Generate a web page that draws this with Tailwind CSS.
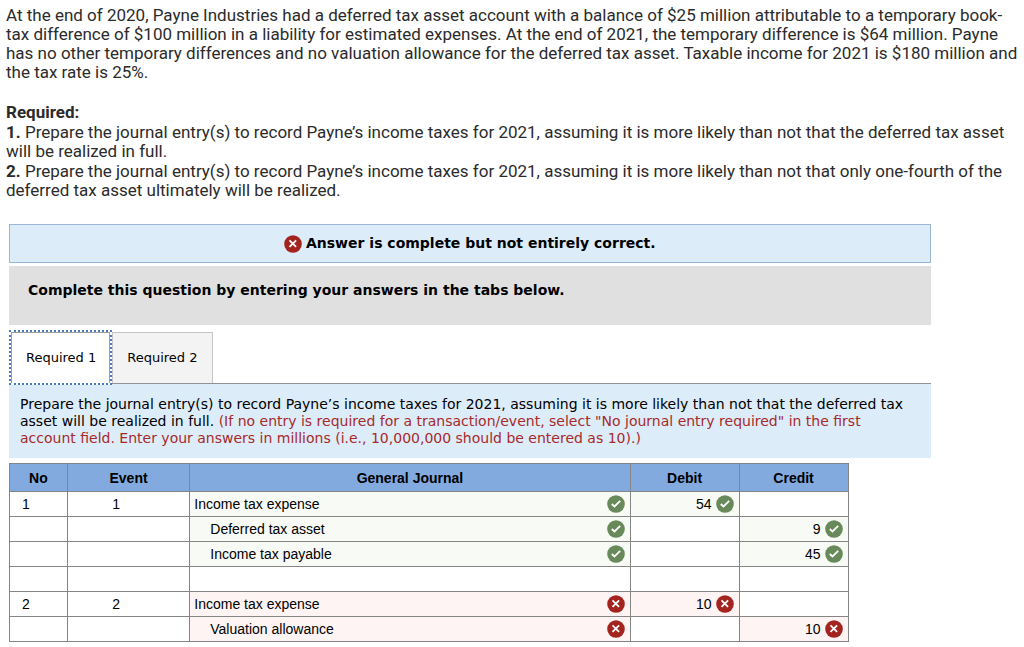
<!DOCTYPE html>
<html lang="en">
<head>
<meta charset="utf-8">
<meta name="viewport" content="width=device-width, initial-scale=1">
<title>Deferred tax asset journal entries</title>
<script src="https://cdn.jsdelivr.net/npm/@tailwindcss/browser@4"></script>
</head>
<body class="bg-white text-black">
<svg class="hidden" aria-hidden="true">
  <symbol id="ok" viewBox="0 0 18 18"><circle cx="9" cy="9" r="8.8" fill="#68895a"/><path d="M4.8 9 7.5 11.4 13.2 5.8" fill="none" stroke="#fff" stroke-width="1.8"/></symbol>
  <symbol id="bad" viewBox="0 0 18 18"><circle cx="9" cy="9" r="8.8" fill="#a3241f"/><path d="M5.5 5.3 12.1 11.9M12.1 5.3 5.5 11.9" fill="none" stroke="#fff" stroke-width="1.8"/></symbol>
</svg>
<main>
  <section class="px-[6px] pt-[6px] font-['Roboto',sans-serif] text-[17px] leading-[19px] text-[#2b2b2b] whitespace-nowrap">
    <p>At the end of 2020, Payne Industries had a deferred tax asset account with a balance of $25 million attributable to a temporary book-<br>tax difference of $100 million in a liability for estimated expenses. At the end of 2021, the temporary difference is $64 million. Payne<br>has no other temporary differences and no valuation allowance for the deferred tax asset. Taxable income for 2021 is $180 million and<br>the tax rate is 25%.</p>
    <h2 class="mt-[21px] font-bold">Required:</h2>
    <p class="mt-px"><b>1.</b> Prepare the journal entry(s) to record Payne’s income taxes for 2021, assuming it is more likely than not that the deferred tax asset<br>will be realized in full.</p>
    <p class="mt-px"><b>2.</b> Prepare the journal entry(s) to record Payne’s income taxes for 2021, assuming it is more likely than not that only one-fourth of the<br>deferred tax asset ultimately will be realized.</p>
  </section>

  <section class="mt-6 ml-[9px] w-[90%] font-['DejaVu_Sans',sans-serif] text-[14px]">
    <div class="flex h-[39px] items-center justify-center gap-1 border border-[#9ab8d6] bg-[#ddecf9] font-bold" role="status">
      <svg class="size-[18px]" aria-hidden="true"><use href="#bad"/></svg>
      <span>Answer is complete but not entirely correct.</span>
    </div>
    <p class="mt-[3px] bg-[#e0e0e0] px-[19px] pt-[14px] pb-[25px] font-bold leading-5">Complete this question by entering your answers in the tabs below.</p>

    <div class="mt-[5px] flex items-end border-b border-[#8f9398] text-[13px]" role="tablist">
      <button type="button" role="tab" aria-selected="true" class="-mb-[2px] h-[55px] border-2 border-dotted border-[#4a7bbf] bg-white"><span class="flex h-full items-center border-x border-t border-[#a0a0a0] pr-[13px] pl-[14px]">Required 1</span></button>
      <button type="button" role="tab" aria-selected="false" class="h-[51px] border border-b-0 border-[#c4c4c4] bg-[#f3f3f3] px-[14px]">Required 2</button>
    </div>
    <div role="tabpanel">
      <p class="bg-[#ddecf9] px-[11px] pt-3 pb-[11px] leading-[17px] whitespace-nowrap">Prepare the journal entry(s) to record Payne’s income taxes for 2021, assuming it is more likely than not that the deferred tax<br>asset will be realized in full. <span class="text-[#a62a2a]">(If no entry is required for a transaction/event, select "No journal entry required" in the first<br>account field. Enter your answers in millions (i.e., 10,000,000 should be entered as 10).)</span></p>

      <table class="mt-[5px] w-[91.1%] table-fixed border-collapse font-['Liberation_Sans',sans-serif] text-[14px] leading-[18px] [&_td]:h-[25px] [&_td]:border [&_td]:border-[#858585] [&_th]:border [&_th]:border-[#858585]">
        <colgroup><col class="w-[6.9%]"><col class="w-[14.6%]"><col><col class="w-[13%]"><col class="w-[13%]"></colgroup>
        <thead><tr class="h-[28px] bg-[#82aadf]"><th>No</th><th>Event</th><th>General Journal</th><th>Debit</th><th>Credit</th></tr></thead>
        <tbody>
          <tr><td class="pl-3">1</td><td class="pr-[25px] text-center">1</td>
            <td class="bg-[#f8faf5] pr-[5px] pl-1"><div class="flex items-center justify-between">Income tax expense<svg class="size-[18px]" role="img" aria-label="Correct"><use href="#ok"/></svg></div></td>
            <td class="bg-[#f8faf5] pr-[5px]"><div class="flex items-center justify-end gap-1">54<svg class="size-[18px]" role="img" aria-label="Correct"><use href="#ok"/></svg></div></td><td></td></tr>
          <tr><td></td><td></td>
            <td class="bg-[#f8faf5] pr-[5px] pl-5"><div class="flex items-center justify-between">Deferred tax asset<svg class="size-[18px]" role="img" aria-label="Correct"><use href="#ok"/></svg></div></td>
            <td></td><td class="bg-[#f8faf5] pr-[5px]"><div class="flex items-center justify-end gap-1">9<svg class="size-[18px]" role="img" aria-label="Correct"><use href="#ok"/></svg></div></td></tr>
          <tr><td></td><td></td>
            <td class="bg-[#f8faf5] pr-[5px] pl-5"><div class="flex items-center justify-between">Income tax payable<svg class="size-[18px]" role="img" aria-label="Correct"><use href="#ok"/></svg></div></td>
            <td></td><td class="bg-[#f8faf5] pr-[5px]"><div class="flex items-center justify-end gap-1">45<svg class="size-[18px]" role="img" aria-label="Correct"><use href="#ok"/></svg></div></td></tr>
          <tr><td></td><td></td><td></td><td></td><td></td></tr>
          <tr><td class="pl-3">2</td><td class="pr-[25px] text-center">2</td>
            <td class="bg-[#fef4f4] pr-[5px] pl-1"><div class="flex items-center justify-between">Income tax expense<svg class="size-[18px]" role="img" aria-label="Incorrect"><use href="#bad"/></svg></div></td>
            <td class="bg-[#fef4f4] pr-[5px]"><div class="flex items-center justify-end gap-1">10<svg class="size-[18px]" role="img" aria-label="Incorrect"><use href="#bad"/></svg></div></td><td></td></tr>
          <tr><td></td><td></td>
            <td class="bg-[#fef4f4] pr-[5px] pl-5"><div class="flex items-center justify-between">Valuation allowance<svg class="size-[18px]" role="img" aria-label="Incorrect"><use href="#bad"/></svg></div></td>
            <td></td><td class="bg-[#fef4f4] pr-[5px]"><div class="flex items-center justify-end gap-1">10<svg class="size-[18px]" role="img" aria-label="Incorrect"><use href="#bad"/></svg></div></td></tr>
        </tbody>
      </table>
    </div>
  </section>
</main>
</body>
</html>
